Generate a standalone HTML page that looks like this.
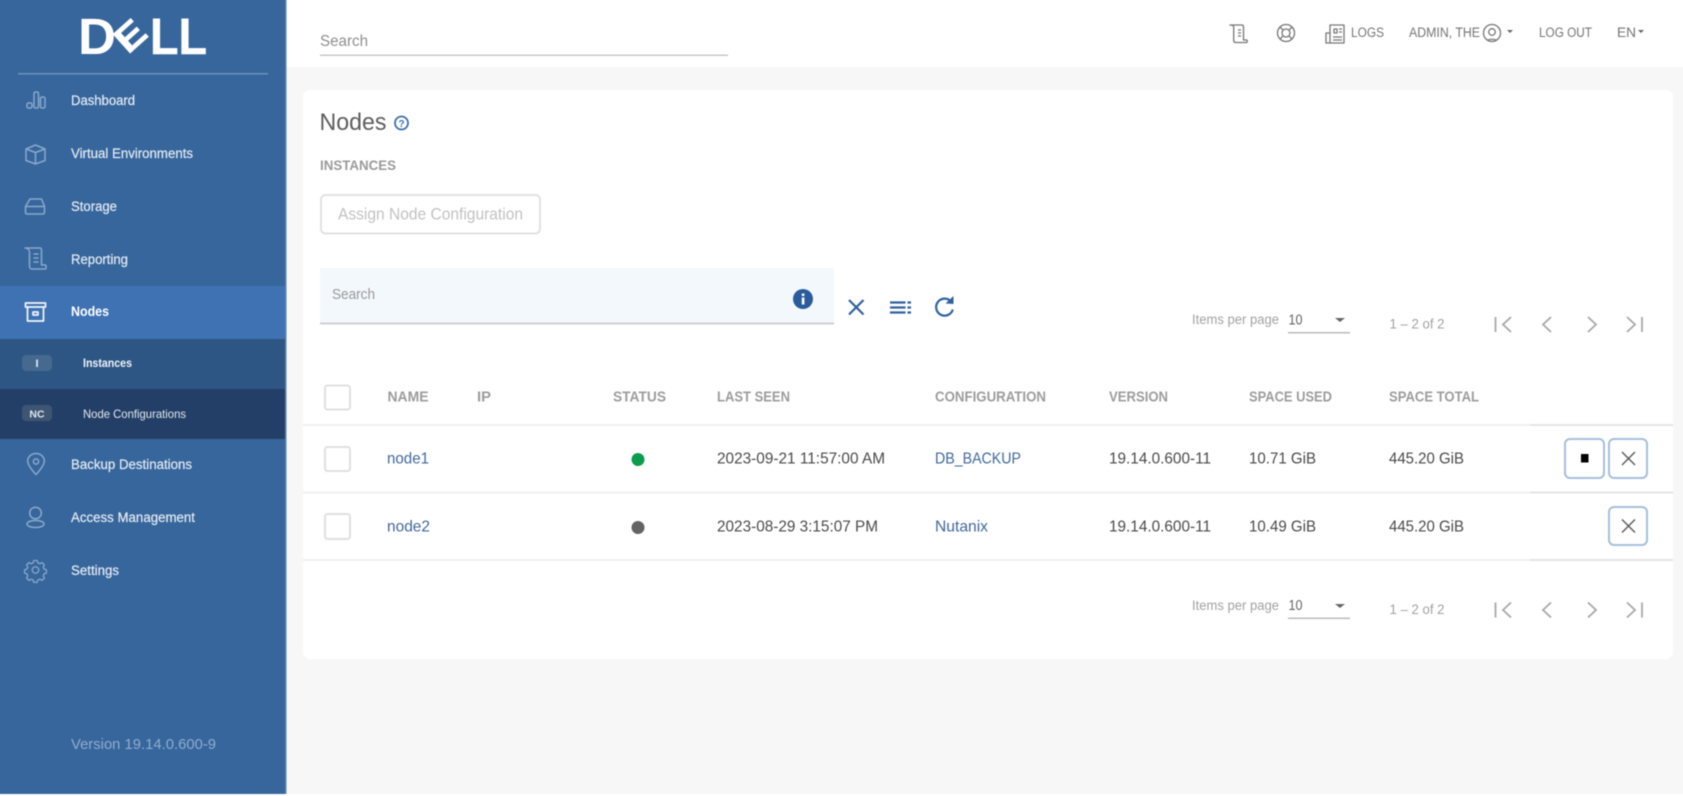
<!DOCTYPE html>
<html lang="en"><head><meta charset="utf-8"><title>Nodes</title>
<style>
html,body{margin:0;padding:0;background:#fff;width:1683px;height:796px;overflow:hidden;position:relative}
svg{display:block;position:absolute;left:-10px;top:-10px;filter:blur(.5px)}
text{font-family:"Liberation Sans",sans-serif;white-space:pre}
.nav{font-size:13.5px;fill:#e4ebf4;stroke:#e4ebf4;stroke-width:.2}
.ic{fill:none;stroke:#89a8cc;stroke-width:1.5;stroke-linecap:round;stroke-linejoin:round}
.top{font-size:13.5px;fill:#757575}
.tic{fill:none;stroke:#777;stroke-width:1.3;stroke-linejoin:round}
.th{font-size:14.5px;font-weight:bold;fill:#9c9c9c}
.td{font-size:16px;fill:#4a4a4a}
.lnk{font-size:16px;fill:#41689d}
.pg{font-size:13.5px;fill:#a2a2a2}
.pi{fill:none;stroke:#a8a8a8;stroke-width:1.8}
.bl{fill:none;stroke:#30619f;stroke-width:2.2}
</style></head><body>
<svg width="1703" height="816" viewBox="-10 -10 1703 816" xmlns="http://www.w3.org/2000/svg">
<rect x="-10" y="-10" width="1703" height="816" fill="#fff"/>
<rect x="286" y="67" width="1407" height="727" fill="#f7f7f7"/>
<rect x="303" y="90" width="1370" height="569" rx="7" fill="#fff"/>

<!-- Sidebar -->
<rect x="-10" y="-10" width="296" height="804" fill="#37669c"/>
<rect x="285" y="-10" width="1.5" height="804" fill="#5a86b8"/>
<rect x="-10" y="286" width="295" height="53" fill="#3e72b2"/>
<rect x="-10" y="339" width="295" height="50" fill="#2d5684"/>
<rect x="-10" y="389" width="295" height="50" fill="#243f67"/>
<rect x="18" y="73" width="250" height="1.5" fill="#6d91bb"/>

<!-- Logo -->
<g fill="#fff" font-weight="bold" style="font-family:'Liberation Sans',sans-serif">
<text x="78" y="54" font-size="51" textLength="38" lengthAdjust="spacingAndGlyphs">D</text>
<text x="0" y="0" font-size="37" textLength="29" lengthAdjust="spacingAndGlyphs" stroke="#fff" stroke-width=".6" transform="translate(128,55) rotate(-42)">E</text>
<text x="150" y="54" font-size="51" textLength="57" lengthAdjust="spacingAndGlyphs" stroke="#fff" stroke-width=".5">LL</text>
</g>

<!-- Nav icons -->
<g class="ic">
<rect x="27" y="103" width="5" height="5" rx="1.500"/><rect x="34" y="92" width="4.500" height="16" rx="1.500"/><rect x="40.500" y="97" width="4.500" height="11" rx="1.500"/>
<path d="M35.500 145l9.500 4v11.500l-9.500 3.500-9.500-3.500V149zM26 149l9.500 3.500L45 149M35.500 152.500V164"/>
<path d="M30 199h11.500l3 7.500v6a1.500 1.500 0 0 1-1.500 1.500H27a1.500 1.500 0 0 1-1.500-1.500v-6zM25.500 206.500h19"/>
<path d="M25 248h15c1.500 0 1.500 1 1.500 2v15h3.500c1.500 0 1.500 4 0 4H32c-2 0-2.500-1-2.500-3.500V252c0-2-1.500-4-4.500-4zM34 254h4M34 258h4M34 262h4"/>
<path d="M36 453.500c-4.700 0-8.300 3.400-8.300 7.600 0 5 8.300 13.400 8.300 13.400s8.300-8.400 8.300-13.400c0-4.200-3.600-7.600-8.300-7.600z"/><circle cx="36" cy="461.500" r="2.600"/>
<circle cx="35.500" cy="513" r="5.800"/><path d="M35.500 520.500c-5 0-8.500 1.500-8.500 3.500s3.500 3.500 8.500 3.500 8.500-1.500 8.500-3.500-3.500-3.500-8.500-3.500z"/>
<g transform="translate(35.500,570) scale(.86) translate(-35.500,-570)"><circle cx="35.500" cy="570" r="3.800"/><path d="M33.500 559h4l.7 2.700 2.500 1 2.400-1.400 2.800 2.800-1.400 2.400 1 2.500 2.700.7v4l-2.700.7-1 2.500 1.400 2.400-2.800 2.800-2.400-1.400-2.500 1-.7 2.700h-4l-.7-2.700-2.500-1-2.400 1.400-2.800-2.800 1.400-2.400-1-2.500-2.700-.7v-4l2.700-.7 1-2.500-1.400-2.400 2.800-2.800 2.400 1.400 2.500-1z"/></g>
</g>
<g fill="none" stroke="#f2f6fb" stroke-width="1.700" stroke-linejoin="round">
<rect x="25.500" y="303" width="20" height="4" /><path d="M27.500 307v14h16v-14M33 312h5v3h-5z"/>
</g>

<!-- Nav text -->
<text class="nav" x="71" y="105" textLength="64" lengthAdjust="spacingAndGlyphs">Dashboard</text>
<text class="nav" x="71" y="158" textLength="122" lengthAdjust="spacingAndGlyphs">Virtual Environments</text>
<text class="nav" x="71" y="211" textLength="46" lengthAdjust="spacingAndGlyphs">Storage</text>
<text class="nav" x="71" y="264" textLength="57" lengthAdjust="spacingAndGlyphs">Reporting</text>
<text class="nav" x="71" y="316" textLength="38" lengthAdjust="spacingAndGlyphs" style="font-weight:bold;fill:#fff;stroke:none">Nodes</text>
<rect x="22" y="355" width="30" height="16" rx="4" fill="#46698f"/>
<text x="37" y="367" text-anchor="middle" font-size="11" font-weight="bold" fill="#e8eef5">I</text>
<text x="83" y="367" font-size="11.500" font-weight="bold" fill="#f0f4f9" textLength="49" lengthAdjust="spacingAndGlyphs">Instances</text>
<rect x="22" y="405" width="30" height="16" rx="4" fill="#3e5674"/>
<text x="37" y="417.500" text-anchor="middle" font-size="10.500" font-weight="bold" fill="#e0e6ee">NC</text>
<text x="83" y="418" font-size="12" fill="#e3e9f1" textLength="103" lengthAdjust="spacingAndGlyphs">Node Configurations</text>
<text class="nav" x="71" y="469" textLength="121" lengthAdjust="spacingAndGlyphs">Backup Destinations</text>
<text class="nav" x="71" y="522" textLength="124" lengthAdjust="spacingAndGlyphs">Access Management</text>
<text class="nav" x="71" y="575" textLength="48" lengthAdjust="spacingAndGlyphs">Settings</text>
<text x="71" y="749" font-size="15" fill="#8faccf" textLength="145" lengthAdjust="spacingAndGlyphs">Version 19.14.0.600-9</text>

<!-- Header -->
<text x="320" y="46" font-size="15.500" fill="#8e8e8e" textLength="48" lengthAdjust="spacingAndGlyphs">Search</text>
<rect x="320" y="54.500" width="408" height="1.500" fill="#c8c8c8"/>
<g class="tic">
<path d="M1230 25h12c1.500 0 1.500 1 1.500 2v13h3c1 0 1 2.500 0 2.500h-11c-1.500 0-1.800-1-1.800-2.500V27c0-1.500-1.500-2-3.700-2zM1238 30h3M1238 33h3M1238 36h3"/>
<circle cx="1286" cy="33" r="8.500"/><circle cx="1286" cy="33" r="4"/><path d="M1280 27l3 3M1292 27l-3 3M1280 39l3-3M1292 39l-3-3"/>
<path d="M1330 25h14v18h-14zM1330 33h-4v10h4M1334 29h3v4h-3zM1339 29h3M1339 32h3M1333 37h9M1333 40h9"/>
<circle cx="1492" cy="33" r="8.500"/><circle cx="1492" cy="32" r="3.300"/><path d="M1488 40c2-1 6-1 8 0"/>
</g>
<path d="M1507 30h6l-3 3zM1638 30h6l-3 3z" fill="#666"/>
<text class="top" x="1351" y="37" textLength="33" lengthAdjust="spacingAndGlyphs">LOGS</text>
<text class="top" x="1409" y="37" textLength="71" lengthAdjust="spacingAndGlyphs">ADMIN, THE</text>
<text class="top" x="1539" y="37" textLength="53" lengthAdjust="spacingAndGlyphs">LOG OUT</text>
<text class="top" x="1617" y="37" textLength="19" lengthAdjust="spacingAndGlyphs">EN</text>

<!-- Title -->
<text x="319.500" y="130" font-size="24.500" fill="#5e5e5e" textLength="67" lengthAdjust="spacingAndGlyphs">Nodes</text>
<circle cx="401.500" cy="123" r="6.500" fill="none" stroke="#3f70ae" stroke-width="1.800"/>
<text x="401.500" y="127" text-anchor="middle" font-size="10" font-weight="bold" fill="#3f70ae">?</text>
<text x="320" y="170" font-size="14" font-weight="bold" fill="#9a9a9a" textLength="76" lengthAdjust="spacingAndGlyphs">INSTANCES</text>
<rect x="321" y="195" width="219" height="38.500" rx="4.500" fill="#fff" stroke="#e2e2e2" stroke-width="2"/>
<text x="338" y="219.500" font-size="16.500" fill="#c2c2c2" textLength="185" lengthAdjust="spacingAndGlyphs">Assign Node Configuration</text>

<!-- Table search -->
<rect x="320" y="268" width="514" height="56" fill="#f3f8fc"/>
<rect x="320" y="322.500" width="514" height="2" fill="#cfd1d2"/>
<text x="332" y="299" font-size="15" fill="#989898" textLength="43" lengthAdjust="spacingAndGlyphs">Search</text>
<circle cx="803" cy="299" r="10" fill="#2c5b9c"/>
<rect x="801.800" y="297.500" width="2.600" height="7" fill="#fff"/><rect x="801.800" y="293.500" width="2.600" height="2.600" fill="#fff"/>
<path class="bl" d="M849 300l14.500 14.500M863.500 300L849 314.500"/>
<path class="bl" d="M890 302.500h15.500M890 307.500h15.500M890 312.500h15.500M907.500 302.500h3.500M907.500 307.500h3.500M907.500 312.500h3.500" stroke-width="1.900"/>
<path class="bl" d="M951 301.500a8.500 8.500 0 1 0 1.800 8"/><path d="M945.500 303.500l8 .5v-8z" fill="#30619f"/>

<!-- Pagination top -->
<text class="pg" x="1192" y="324" textLength="87" lengthAdjust="spacingAndGlyphs">Items per page</text>
<text x="1288.500" y="324.500" font-size="14.500" fill="#666" textLength="14" lengthAdjust="spacingAndGlyphs">10</text>
<path d="M1335 318h10l-5 4z" fill="#666"/>
<rect x="1288" y="332" width="62" height="1.500" fill="#bbb"/>
<text class="pg" x="1389.500" y="328.500" textLength="55" lengthAdjust="spacingAndGlyphs">1 – 2 of 2</text>
<path class="pi" d="M1495.500 317v15M1511 317l-8 7.500 8 7.500M1551 317l-8 7.500 8 7.500M1588 317l8 7.500-8 7.500M1627 317l8 7.500-8 7.500M1642 317v15"/>

<!-- Table head -->
<rect x="325" y="385.500" width="25" height="24" rx="2.500" fill="#fff" stroke="#e0e0e0" stroke-width="2"/>
<text class="th" x="387.500" y="401.500" textLength="41" lengthAdjust="spacingAndGlyphs">NAME</text>
<text class="th" x="477" y="401.500" textLength="14" lengthAdjust="spacingAndGlyphs">IP</text>
<text class="th" x="613" y="401.500" textLength="53" lengthAdjust="spacingAndGlyphs">STATUS</text>
<text class="th" x="717" y="401.500" textLength="73" lengthAdjust="spacingAndGlyphs">LAST SEEN</text>
<text class="th" x="935" y="401.500" textLength="111" lengthAdjust="spacingAndGlyphs">CONFIGURATION</text>
<text class="th" x="1109" y="401.500" textLength="59" lengthAdjust="spacingAndGlyphs">VERSION</text>
<text class="th" x="1249" y="401.500" textLength="83" lengthAdjust="spacingAndGlyphs">SPACE USED</text>
<text class="th" x="1389" y="401.500" textLength="90" lengthAdjust="spacingAndGlyphs">SPACE TOTAL</text>
<rect x="303" y="424" width="1227" height="2" fill="#f0f0f0"/><rect x="1530" y="424" width="143" height="2" fill="#e4e4e4"/>
<rect x="303" y="491.500" width="1227" height="2" fill="#f0f0f0"/><rect x="1530" y="491.500" width="143" height="2" fill="#e4e4e4"/>
<rect x="303" y="559" width="1227" height="2" fill="#f0f0f0"/><rect x="1530" y="559" width="143" height="2" fill="#e4e4e4"/>

<!-- Row 1 -->
<rect x="325" y="447" width="25" height="24" rx="2.500" fill="#fff" stroke="#e0e0e0" stroke-width="2"/>
<text class="lnk" x="387" y="463.500" textLength="42" lengthAdjust="spacingAndGlyphs">node1</text>
<circle cx="638" cy="459.500" r="6.500" fill="#0b9c4e"/>
<text class="td" x="717" y="463.500" textLength="168" lengthAdjust="spacingAndGlyphs">2023-09-21 11:57:00 AM</text>
<text class="lnk" x="935" y="463.500" textLength="86" lengthAdjust="spacingAndGlyphs">DB_BACKUP</text>
<text class="td" x="1109" y="463.500" textLength="102" lengthAdjust="spacingAndGlyphs">19.14.0.600-11</text>
<text class="td" x="1249" y="463.500" textLength="67" lengthAdjust="spacingAndGlyphs">10.71 GiB</text>
<text class="td" x="1389" y="463.500" textLength="75" lengthAdjust="spacingAndGlyphs">445.20 GiB</text>
<rect x="1565" y="439" width="39" height="39" rx="5" fill="#fff" stroke="#a6bedb" stroke-width="2"/>
<rect x="1581" y="454" width="7.500" height="8.500" fill="#000"/>
<rect x="1609" y="439" width="38" height="39" rx="5" fill="#fff" stroke="#a6bedb" stroke-width="2"/>
<path d="M1622 452l13 13M1635 452l-13 13" fill="none" stroke="#555" stroke-width="1.300"/>

<!-- Row 2 -->
<rect x="325" y="514" width="25" height="25" rx="2.500" fill="#fff" stroke="#e0e0e0" stroke-width="2"/>
<text class="lnk" x="387" y="531.500" textLength="43" lengthAdjust="spacingAndGlyphs">node2</text>
<circle cx="638" cy="527.500" r="6.500" fill="#636363"/>
<text class="td" x="717" y="531.500" textLength="161" lengthAdjust="spacingAndGlyphs">2023-08-29 3:15:07 PM</text>
<text class="lnk" x="935" y="531.500" textLength="53" lengthAdjust="spacingAndGlyphs">Nutanix</text>
<text class="td" x="1109" y="531.500" textLength="102" lengthAdjust="spacingAndGlyphs">19.14.0.600-11</text>
<text class="td" x="1249" y="531.500" textLength="67" lengthAdjust="spacingAndGlyphs">10.49 GiB</text>
<text class="td" x="1389" y="531.500" textLength="75" lengthAdjust="spacingAndGlyphs">445.20 GiB</text>
<rect x="1609" y="507" width="38" height="38" rx="5" fill="#fff" stroke="#a6bedb" stroke-width="2"/>
<path d="M1622 519.500l13 13M1635 519.500l-13 13" fill="none" stroke="#555" stroke-width="1.300"/>

<!-- Pagination bottom -->
<text class="pg" x="1192" y="610" textLength="87" lengthAdjust="spacingAndGlyphs">Items per page</text>
<text x="1288.500" y="610" font-size="14.500" fill="#666" textLength="14" lengthAdjust="spacingAndGlyphs">10</text>
<path d="M1335 604h10l-5 4z" fill="#666"/>
<rect x="1288" y="617.500" width="62" height="1.500" fill="#bbb"/>
<text class="pg" x="1389.500" y="614" textLength="55" lengthAdjust="spacingAndGlyphs">1 – 2 of 2</text>
<path class="pi" d="M1495.500 602.500v15M1511 602.500l-8 7.500 8 7.500M1551 602.500l-8 7.500 8 7.500M1588 602.500l8 7.500-8 7.500M1627 602.500l8 7.500-8 7.500M1642 602.500v15"/>
</svg>
</body></html>
